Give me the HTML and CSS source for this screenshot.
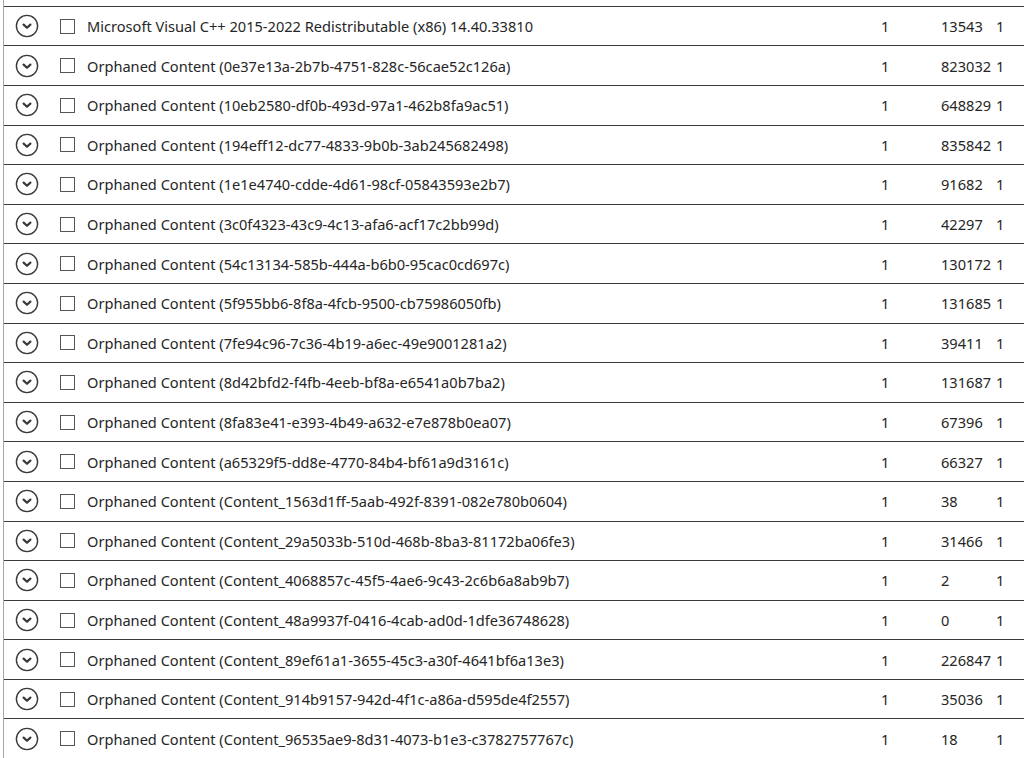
FILE: index.html
```html
<!DOCTYPE html>
<html>
<head>
<meta charset="utf-8">
<link rel="stylesheet" href="styles.css">
</head>
<body>
<div class="viewport">
  <div class="list">
    <div class="row partial"><span class="exp"><svg viewBox="0 0 24 24" width="24" height="24"><circle cx="12" cy="12" r="10.6"/><path d="M8.6 10.6 L12 13.8 L15.4 10.6"/></svg></span><span class="chk"></span><span class="name"></span><span class="c1"></span><span class="c2"></span><span class="c3"></span></div>
    <div class="row"><span class="exp"><svg viewBox="0 0 24 24" width="24" height="24"><circle cx="12" cy="12" r="10.6"/><path d="M8.6 10.6 L12 13.8 L15.4 10.6"/></svg></span><span class="chk"></span><span class="name">Microsoft Visual C++ 2015-2022 Redistributable (x86) 14.40.33810</span><span class="c1">1</span><span class="c2">13543</span><span class="c3">1</span></div>
    <div class="row"><span class="exp"><svg viewBox="0 0 24 24" width="24" height="24"><circle cx="12" cy="12" r="10.6"/><path d="M8.6 10.6 L12 13.8 L15.4 10.6"/></svg></span><span class="chk"></span><span class="name">Orphaned Content (0e37e13a-2b7b-4751-828c-56cae52c126a)</span><span class="c1">1</span><span class="c2">823032</span><span class="c3">1</span></div>
    <div class="row"><span class="exp"><svg viewBox="0 0 24 24" width="24" height="24"><circle cx="12" cy="12" r="10.6"/><path d="M8.6 10.6 L12 13.8 L15.4 10.6"/></svg></span><span class="chk"></span><span class="name">Orphaned Content (10eb2580-df0b-493d-97a1-462b8fa9ac51)</span><span class="c1">1</span><span class="c2">648829</span><span class="c3">1</span></div>
    <div class="row"><span class="exp"><svg viewBox="0 0 24 24" width="24" height="24"><circle cx="12" cy="12" r="10.6"/><path d="M8.6 10.6 L12 13.8 L15.4 10.6"/></svg></span><span class="chk"></span><span class="name">Orphaned Content (194eff12-dc77-4833-9b0b-3ab245682498)</span><span class="c1">1</span><span class="c2">835842</span><span class="c3">1</span></div>
    <div class="row"><span class="exp"><svg viewBox="0 0 24 24" width="24" height="24"><circle cx="12" cy="12" r="10.6"/><path d="M8.6 10.6 L12 13.8 L15.4 10.6"/></svg></span><span class="chk"></span><span class="name">Orphaned Content (1e1e4740-cdde-4d61-98cf-05843593e2b7)</span><span class="c1">1</span><span class="c2">91682</span><span class="c3">1</span></div>
    <div class="row"><span class="exp"><svg viewBox="0 0 24 24" width="24" height="24"><circle cx="12" cy="12" r="10.6"/><path d="M8.6 10.6 L12 13.8 L15.4 10.6"/></svg></span><span class="chk"></span><span class="name">Orphaned Content (3c0f4323-43c9-4c13-afa6-acf17c2bb99d)</span><span class="c1">1</span><span class="c2">42297</span><span class="c3">1</span></div>
    <div class="row"><span class="exp"><svg viewBox="0 0 24 24" width="24" height="24"><circle cx="12" cy="12" r="10.6"/><path d="M8.6 10.6 L12 13.8 L15.4 10.6"/></svg></span><span class="chk"></span><span class="name">Orphaned Content (54c13134-585b-444a-b6b0-95cac0cd697c)</span><span class="c1">1</span><span class="c2">130172</span><span class="c3">1</span></div>
    <div class="row"><span class="exp"><svg viewBox="0 0 24 24" width="24" height="24"><circle cx="12" cy="12" r="10.6"/><path d="M8.6 10.6 L12 13.8 L15.4 10.6"/></svg></span><span class="chk"></span><span class="name">Orphaned Content (5f955bb6-8f8a-4fcb-9500-cb75986050fb)</span><span class="c1">1</span><span class="c2">131685</span><span class="c3">1</span></div>
    <div class="row"><span class="exp"><svg viewBox="0 0 24 24" width="24" height="24"><circle cx="12" cy="12" r="10.6"/><path d="M8.6 10.6 L12 13.8 L15.4 10.6"/></svg></span><span class="chk"></span><span class="name">Orphaned Content (7fe94c96-7c36-4b19-a6ec-49e9001281a2)</span><span class="c1">1</span><span class="c2">39411</span><span class="c3">1</span></div>
    <div class="row"><span class="exp"><svg viewBox="0 0 24 24" width="24" height="24"><circle cx="12" cy="12" r="10.6"/><path d="M8.6 10.6 L12 13.8 L15.4 10.6"/></svg></span><span class="chk"></span><span class="name">Orphaned Content (8d42bfd2-f4fb-4eeb-bf8a-e6541a0b7ba2)</span><span class="c1">1</span><span class="c2">131687</span><span class="c3">1</span></div>
    <div class="row"><span class="exp"><svg viewBox="0 0 24 24" width="24" height="24"><circle cx="12" cy="12" r="10.6"/><path d="M8.6 10.6 L12 13.8 L15.4 10.6"/></svg></span><span class="chk"></span><span class="name">Orphaned Content (8fa83e41-e393-4b49-a632-e7e878b0ea07)</span><span class="c1">1</span><span class="c2">67396</span><span class="c3">1</span></div>
    <div class="row"><span class="exp"><svg viewBox="0 0 24 24" width="24" height="24"><circle cx="12" cy="12" r="10.6"/><path d="M8.6 10.6 L12 13.8 L15.4 10.6"/></svg></span><span class="chk"></span><span class="name">Orphaned Content (a65329f5-dd8e-4770-84b4-bf61a9d3161c)</span><span class="c1">1</span><span class="c2">66327</span><span class="c3">1</span></div>
    <div class="row"><span class="exp"><svg viewBox="0 0 24 24" width="24" height="24"><circle cx="12" cy="12" r="10.6"/><path d="M8.6 10.6 L12 13.8 L15.4 10.6"/></svg></span><span class="chk"></span><span class="name">Orphaned Content (Content_1563d1ff-5aab-492f-8391-082e780b0604)</span><span class="c1">1</span><span class="c2">38</span><span class="c3">1</span></div>
    <div class="row"><span class="exp"><svg viewBox="0 0 24 24" width="24" height="24"><circle cx="12" cy="12" r="10.6"/><path d="M8.6 10.6 L12 13.8 L15.4 10.6"/></svg></span><span class="chk"></span><span class="name">Orphaned Content (Content_29a5033b-510d-468b-8ba3-81172ba06fe3)</span><span class="c1">1</span><span class="c2">31466</span><span class="c3">1</span></div>
    <div class="row"><span class="exp"><svg viewBox="0 0 24 24" width="24" height="24"><circle cx="12" cy="12" r="10.6"/><path d="M8.6 10.6 L12 13.8 L15.4 10.6"/></svg></span><span class="chk"></span><span class="name">Orphaned Content (Content_4068857c-45f5-4ae6-9c43-2c6b6a8ab9b7)</span><span class="c1">1</span><span class="c2">2</span><span class="c3">1</span></div>
    <div class="row"><span class="exp"><svg viewBox="0 0 24 24" width="24" height="24"><circle cx="12" cy="12" r="10.6"/><path d="M8.6 10.6 L12 13.8 L15.4 10.6"/></svg></span><span class="chk"></span><span class="name">Orphaned Content (Content_48a9937f-0416-4cab-ad0d-1dfe36748628)</span><span class="c1">1</span><span class="c2">0</span><span class="c3">1</span></div>
    <div class="row"><span class="exp"><svg viewBox="0 0 24 24" width="24" height="24"><circle cx="12" cy="12" r="10.6"/><path d="M8.6 10.6 L12 13.8 L15.4 10.6"/></svg></span><span class="chk"></span><span class="name">Orphaned Content (Content_89ef61a1-3655-45c3-a30f-4641bf6a13e3)</span><span class="c1">1</span><span class="c2">226847</span><span class="c3">1</span></div>
    <div class="row"><span class="exp"><svg viewBox="0 0 24 24" width="24" height="24"><circle cx="12" cy="12" r="10.6"/><path d="M8.6 10.6 L12 13.8 L15.4 10.6"/></svg></span><span class="chk"></span><span class="name">Orphaned Content (Content_914b9157-942d-4f1c-a86a-d595de4f2557)</span><span class="c1">1</span><span class="c2">35036</span><span class="c3">1</span></div>
    <div class="row last"><span class="exp"><svg viewBox="0 0 24 24" width="24" height="24"><circle cx="12" cy="12" r="10.6"/><path d="M8.6 10.6 L12 13.8 L15.4 10.6"/></svg></span><span class="chk"></span><span class="name">Orphaned Content (Content_96535ae9-8d31-4073-b1e3-c3782757767c)</span><span class="c1">1</span><span class="c2">18</span><span class="c3">1</span></div>
  </div>
</div>
</body>
</html>
```

FILE: styles.css
```css
html, body {
  margin: 0;
  padding: 0;
  background: #ffffff;
}
.viewport {
  width: 1024px;
  height: 758px;
  overflow: hidden;
  background: #ffffff;
}
.list {
  margin-left: 3px;
  margin-top: -32.8px;
  border-left: 1px solid #a9a9a9;
  font-family: "Segoe UI", "Noto Sans", "Open Sans", sans-serif;
  font-size: 14.6px;
  color: #262626;
}
.row {
  display: flex;
  align-items: center;
  height: 39.6px;
  box-sizing: border-box;
  border-bottom: 1.5px solid #3c3c3c;
}
.row.last {
  border-bottom: 1px solid #bdbdbd;
}
.exp {
  width: 46px;
  flex: none;
  display: flex;
  justify-content: center;
}
.exp svg {
  display: block;
  fill: none;
  stroke: #3a3a3a;
  stroke-width: 1.4;
}
.exp svg path {
  stroke-width: 2.2;
  stroke-linecap: round;
  stroke-linejoin: round;
}
.chk {
  flex: none;
  width: 15px;
  height: 15px;
  margin-left: 10px;
  box-sizing: border-box;
  border: 1px solid #555555;
  background: #ffffff;
}
.name {
  flex: none;
  width: 794px;
  margin-left: 12px;
  white-space: nowrap;
  overflow: hidden;
}
.c1 {
  flex: none;
  width: 60px;
  white-space: nowrap;
}
.c2 {
  flex: none;
  width: 55px;
  white-space: nowrap;
  overflow: hidden;
}
.c3 {
  flex: none;
  white-space: nowrap;
}
```
